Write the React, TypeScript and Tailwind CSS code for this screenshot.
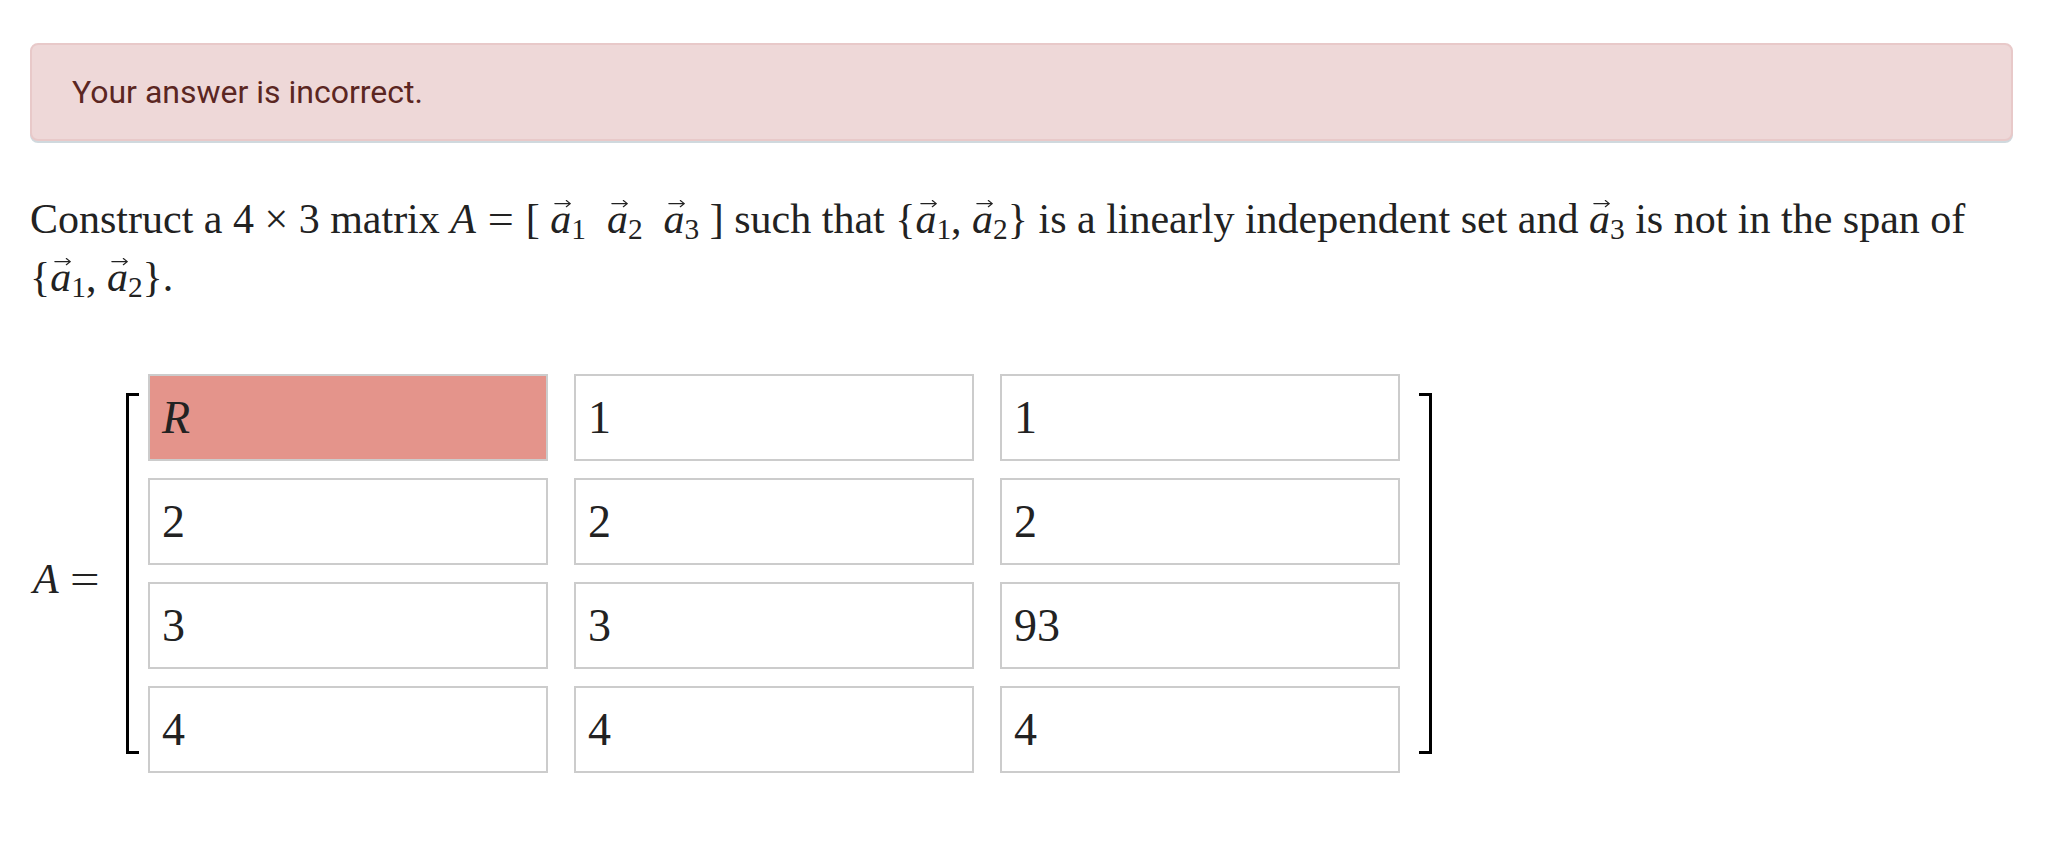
import React from "react";

function Vec({ n }: { n: string }) {
  return (
    <span className="inline-block whitespace-nowrap">
      <span className="relative inline-block italic leading-none">
        a
        <svg
          className="absolute left-[0.1em] top-[0.03em] h-[0.22em] w-[0.42em]"
          viewBox="0 0 20 10"
          fill="none"
          stroke="currentColor"
          strokeWidth="1.4"
          strokeLinecap="round"
          strokeLinejoin="round"
        >
          <path d="M1 5H18.5M14 1.5L18.5 5L14 8.5" />
        </svg>
      </span>
      <span className="relative top-[0.22em] text-[0.7em] leading-none">{n}</span>
    </span>
  );
}

const rows = [
  ["R", "1", "1"],
  ["2", "2", "2"],
  ["3", "3", "93"],
  ["4", "4", "4"],
];

export default function App() {
  return (
    <div className="min-h-screen bg-white pl-[30px] pr-[53px] pt-[43px]">
      {/* feedback */}
      <div className="rounded-[8px] border-2 border-[#e8c9c9] bg-[#eed8d8] pl-[40px] pr-[38px] py-[23px] font-['Roboto',sans-serif] text-[32px] leading-[48px] text-[#5b2622] shadow-[0_2px_0_#d0d9de]">
        Your answer is incorrect.
      </div>

      {/* question */}
      <p className="mt-[49px] font-['Liberation_Serif',serif] text-[42px] leading-[58px] text-[#222]">
        Construct a <span>4 × 3</span> matrix <span className="italic">A</span>{" "}
        <span className="mx-[0.06em] inline-block scale-x-110">=</span>{" "}[ <Vec n="1" />&nbsp;&nbsp;<Vec n="2" />&nbsp;&nbsp;<Vec n="3" /> ] such that {"{"}
        <Vec n="1" />, <Vec n="2" />
        {"}"} is a linearly independent set and <Vec n="3" /> is not in the span of
        <br />
        {"{"}
        <Vec n="1" />, <Vec n="2" />
        {"}"}.
      </p>

      {/* matrix */}
      <div className="mt-[68px] flex items-center font-['Liberation_Serif',serif] text-[#222]">
        <div className="w-[96px] pl-[3px] pt-[12px] text-[42px]">
          <span className="italic">A</span>
          <span className="ml-[0.35em] inline-block scale-x-125">=</span>
        </div>
        <div className="h-[361px] w-[13px] border-y-[3px] border-l-[3px] border-black" />
        <div className="ml-[9px] grid grid-cols-[repeat(3,400px)] gap-x-[26px] gap-y-[17px]">
          {rows.flat().map((v, i) => (
            <div
              key={i}
              className={`flex h-[87px] items-center border-2 border-[#cccccc] pl-[12px] text-[46px] ${
                v === "R" ? "bg-[#e4948b] italic" : "bg-white"
              }`}
            >
              {v}
            </div>
          ))}
        </div>
        <div className="ml-[19px] h-[361px] w-[13px] border-y-[3px] border-r-[3px] border-black" />
      </div>
    </div>
  );
}
